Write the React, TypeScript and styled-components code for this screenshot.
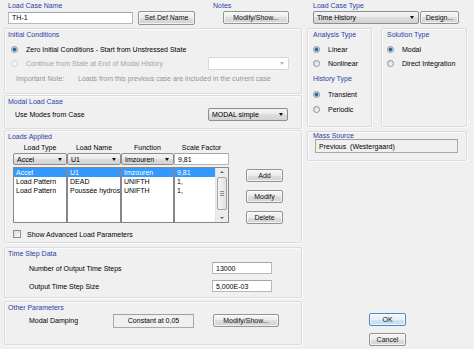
import React from "react";
import styled, { createGlobalStyle } from "styled-components";

const GlobalStyle = createGlobalStyle`
  html, body {
    margin: 0;
    padding: 0;
    background: #f0f0f0;
  }
  body {
    font-family: "Liberation Sans", Arial, sans-serif;
    font-size: 7px;
    color: #000000;
  }
`;

const Dialog = styled.div`
  box-sizing: border-box;
  width: 474px;
  height: 349px;
  overflow: hidden;
  display: flex;
  gap: 3px;
  padding-left: 4px;
  background: #f0f0f0;
`;

const LeftCol = styled.div`
  width: 298px;
  display: flex;
  flex-direction: column;
`;

const RightCol = styled.div`
  width: 165px;
  display: flex;
  flex-direction: column;
`;

const TopRow = styled.div`
  height: 28px;
  display: flex;
`;

const TopField = styled.div<{ $w: number; $pl: number }>`
  width: ${(p) => p.$w}px;
  padding-left: ${(p) => p.$pl}px;
  box-sizing: border-box;
  display: flex;
  flex-direction: column;
`;

const Caption = styled.div<{ $h?: number }>`
  color: #2b3fa6;
  height: ${(p) => p.$h ?? 11}px;
  line-height: ${(p) => p.$h ?? 11}px;
  white-space: nowrap;
`;

const GroupBox = styled.div<{ $h: number; $mt?: number; $w?: number; $pl?: number }>`
  box-sizing: border-box;
  width: ${(p) => (p.$w ? `${p.$w}px` : "100%")};
  height: ${(p) => p.$h}px;
  margin-top: ${(p) => p.$mt ?? 0}px;
  border: 1px solid #dcdcdc;
  border-radius: 2px;
  box-shadow: inset 1px 1px 0 #fafafa, 1px 1px 0 #fafafa;
  padding-left: ${(p) => p.$pl ?? 3}px;
  display: flex;
  flex-direction: column;
  flex: none;
`;

const Line = styled.div<{ $h: number; $mt?: number; $pl?: number }>`
  display: flex;
  align-items: center;
  height: ${(p) => p.$h}px;
  margin-top: ${(p) => p.$mt ?? 0}px;
  padding-left: ${(p) => p.$pl ?? 0}px;
  white-space: nowrap;
  flex: none;
`;

const Label = styled.span<{ $w?: number; $muted?: boolean }>`
  display: inline-block;
  width: ${(p) => (p.$w ? `${p.$w}px` : "auto")};
  flex: none;
  color: ${(p) => (p.$muted ? "#959595" : "inherit")};
`;

const Btn = styled.div<{ $w: number; $h?: number; $default?: boolean }>`
  box-sizing: border-box;
  width: ${(p) => p.$w}px;
  height: ${(p) => p.$h ?? 13}px;
  flex: none;
  display: flex;
  align-items: center;
  justify-content: center;
  border: 1px solid ${(p) => (p.$default ? "#4a8ac0" : "#939393")};
  border-radius: 2px;
  background: ${(p) =>
    p.$default
      ? "linear-gradient(#f4f9fd 0%, #e4eff8 50%, #d2e4f3 50%, #c6dcee 100%)"
      : "linear-gradient(#f5f5f5 0%, #ececec 50%, #dedede 50%, #d3d3d3 100%)"};
  box-shadow: inset 0 0 0 1px rgba(255, 255, 255, 0.7);
  color: #111;
  white-space: nowrap;
`;

const Combo = styled.div<{ $w: number; $h?: number; $disabled?: boolean }>`
  box-sizing: border-box;
  width: ${(p) => p.$w}px;
  height: ${(p) => p.$h ?? 13}px;
  flex: none;
  display: flex;
  align-items: center;
  justify-content: space-between;
  padding: 0 4px 0 3px;
  border: 1px solid ${(p) => (p.$disabled ? "#d6d6d6" : "#8e8e8e")};
  border-radius: ${(p) => (p.$disabled ? 1 : 2)}px;
  background: ${(p) =>
    p.$disabled
      ? "#ffffff"
      : "linear-gradient(#f3f3f3 0%, #ebebeb 50%, #dddddd 50%, #d2d2d2 100%)"};
  white-space: nowrap;
  overflow: hidden;
`;

const Arrow = styled.span<{ $disabled?: boolean }>`
  width: 0;
  height: 0;
  flex: none;
  border-left: 2.5px solid transparent;
  border-right: 2.5px solid transparent;
  border-top: 3px solid ${(p) => (p.$disabled ? "#b4b4b4" : "#111")};
`;

const TextBox = styled.div<{ $w: number; $h?: number; $grey?: boolean; $center?: boolean }>`
  box-sizing: border-box;
  width: ${(p) => p.$w}px;
  height: ${(p) => p.$h ?? 13}px;
  flex: none;
  display: flex;
  align-items: center;
  justify-content: ${(p) => (p.$center ? "center" : "flex-start")};
  padding-left: ${(p) => (p.$center ? 0 : 3)}px;
  border: 1px solid ${(p) => (p.$grey ? "#a9a9a9" : "#b5b8bf")};
  border-top-color: ${(p) => (p.$grey ? "#a0a0a0" : "#a3a6ad")};
  background: ${(p) => (p.$grey ? "#f0f0f0" : "#ffffff")};
  white-space: nowrap;
  overflow: hidden;
`;

const RadioDot = styled.span<{ $checked?: boolean; $disabled?: boolean }>`
  box-sizing: border-box;
  width: 7px;
  height: 7px;
  flex: none;
  border-radius: 50%;
  border: 1px solid ${(p) => (p.$disabled ? "#d2d2d2" : "#909090")};
  background: ${(p) =>
    p.$checked
      ? "radial-gradient(circle, #17508d 0, #2e73b8 1.3px, #bcd2ea 2.2px, #f2f2f2 2.6px)"
      : p.$disabled
      ? "#f4f4f4"
      : "linear-gradient(135deg, #d6d6d6, #fbfbfb)"};
`;

const Option = styled.div<{ $disabled?: boolean }>`
  display: flex;
  align-items: center;
  gap: 8px;
  color: ${(p) => (p.$disabled ? "#a6a6a6" : "inherit")};
`;

const CheckSquare = styled.span`
  box-sizing: border-box;
  width: 8px;
  height: 8px;
  flex: none;
  border: 1px solid #8f8f8f;
  background: linear-gradient(135deg, #d8d8d8, #fafafa);
`;

const TableArea = styled.div`
  display: flex;
  padding-left: 5px;
`;

const Grid = styled.div`
  display: flex;
  flex-direction: column;
`;

const GridRow = styled.div<{ $h: number; $mt?: number }>`
  display: flex;
  height: ${(p) => p.$h}px;
  margin-top: ${(p) => p.$mt ?? 0}px;
`;

const HeadCell = styled.div<{ $w: number }>`
  width: ${(p) => p.$w}px;
  display: flex;
  align-items: center;
  justify-content: center;
  white-space: nowrap;
`;

const ListBox = styled.div<{ $w: number }>`
  box-sizing: border-box;
  width: ${(p) => p.$w}px;
  height: 100%;
  border: 1px solid #828790;
  background: #ffffff;
  display: flex;
  overflow: hidden;
`;

const ListItems = styled.div`
  flex: 1;
  min-width: 0;
  display: flex;
  flex-direction: column;
`;

const ListItem = styled.div<{ $selected?: boolean }>`
  height: 9px;
  line-height: 9px;
  padding-left: 2px;
  white-space: nowrap;
  overflow: hidden;
  background: ${(p) => (p.$selected ? "#3399ff" : "transparent")};
  color: ${(p) => (p.$selected ? "#ffffff" : "inherit")};
`;

const ScrollBar = styled.div`
  width: 12px;
  flex: none;
  background: #ececec;
  border-left: 1px solid #e2e2e2;
  display: flex;
  flex-direction: column;
  align-items: center;
`;

const ScrollArrow = styled.span<{ $up?: boolean }>`
  width: 0;
  height: 0;
  margin: 3px 0;
  border-left: 2px solid transparent;
  border-right: 2px solid transparent;
  ${(p) => (p.$up ? "border-bottom: 2px solid #606060;" : "border-top: 2px solid #606060;")}
`;

const Thumb = styled.div`
  box-sizing: border-box;
  width: 10px;
  height: 33px;
  margin-top: 1px;
  border: 1px solid #a3a3a3;
  border-radius: 2px;
  background: linear-gradient(90deg, #f4f4f4, #e2e2e2);
  display: flex;
  align-items: center;
  justify-content: center;
`;

const Grip = styled.span`
  width: 4px;
  height: 5px;
  background: repeating-linear-gradient(#8a8a8a 0 1px, transparent 1px 2px);
`;

const Spacer = styled.div`
  flex: 1;
`;

const ButtonStack = styled.div<{ $pt: number; $gap: number; $ml?: number }>`
  display: flex;
  flex-direction: column;
  align-items: center;
  gap: ${(p) => p.$gap}px;
  padding-top: ${(p) => p.$pt}px;
  margin-left: ${(p) => p.$ml ?? 0}px;
`;

const BoxRow = styled.div`
  display: flex;
  gap: 9px;
  margin-left: 2px;
  margin-top: 4px;
`;

const FooterButtons = styled.div`
  margin-top: auto;
  margin-bottom: 3px;
  display: flex;
  flex-direction: column;
  align-items: center;
  gap: 7px;
`;

const columns = [54, 54, 53, 55];

const listData = [
  ["Accel", "Load Pattern", "Load Pattern"],
  ["U1", "DEAD", "Poussée hydros"],
  ["Imzouren", "UNIFTH", "UNIFTH"],
  ["9,81", "1,", "1,"],
];

const App: React.FC = () => {
  return (
    <>
      <GlobalStyle />
      <Dialog>
        <LeftCol>
          <TopRow>
            <TopField $w={205} $pl={4}>
              <Caption>Load Case Name</Caption>
              <Line $h={13}>
                <TextBox $w={125} $h={12}>TH-1</TextBox>
                <Btn $w={57} $h={14} style={{ marginLeft: 5 }}>Set Def Name</Btn>
              </Line>
            </TopField>
            <TopField $w={90} $pl={4}>
              <Caption>Notes</Caption>
              <Line $h={13} $pl={10}>
                <Btn $w={66}>Modify/Show...</Btn>
              </Line>
            </TopField>
          </TopRow>

          <GroupBox $h={66}>
            <Caption>Initial Conditions</Caption>
            <Line $h={14} $mt={2} $pl={3}>
              <Option>
                <RadioDot $checked />
                Zero Initial Conditions - Start from Unstressed State
              </Option>
            </Line>
            <Line $h={14} $pl={3}>
              <Option $disabled>
                <RadioDot $disabled />
                Continue from State at End of Modal History
              </Option>
              <Combo $w={81} $disabled style={{ marginLeft: "auto", marginRight: 12 }}>
                <span />
                <Arrow $disabled />
              </Combo>
            </Line>
            <Line $h={16} $pl={8}>
              <Label $w={62} $muted>Important Note:</Label>
              <Label $muted>Loads from this previous case are included in the current case</Label>
            </Line>
          </GroupBox>

          <GroupBox $h={34} $mt={1}>
            <Caption>Modal Load Case</Caption>
            <Line $h={14} $pl={7}>
              <Label>Use Modes from Case</Label>
              <Combo $w={80} style={{ marginLeft: "auto", marginRight: 13 }}>
                MODAL simple
                <Arrow />
              </Combo>
            </Line>
          </GroupBox>

          <GroupBox $h={113} $mt={1}>
            <Caption>Loads Applied</Caption>
            <TableArea>
              <Grid>
                <GridRow $h={11}>
                  <HeadCell $w={54}>Load Type</HeadCell>
                  <HeadCell $w={54}>Load Name</HeadCell>
                  <HeadCell $w={53}>Function</HeadCell>
                  <HeadCell $w={55}>Scale Factor</HeadCell>
                </GridRow>
                <GridRow $h={12}>
                  <Combo $w={54} $h={12}>
                    Accel
                    <Arrow />
                  </Combo>
                  <Combo $w={54} $h={12}>
                    U1
                    <Arrow />
                  </Combo>
                  <Combo $w={53} $h={12}>
                    Imzouren
                    <Arrow />
                  </Combo>
                  <TextBox $w={55} $h={12}>9,81</TextBox>
                </GridRow>
                <GridRow $h={56} $mt={2}>
                  {listData.map((items, c) => (
                    <ListBox key={c} $w={columns[c]}>
                      <ListItems>
                        {items.map((item, r) => (
                          <ListItem key={r} $selected={r === 0}>
                            {item}
                          </ListItem>
                        ))}
                      </ListItems>
                      {c === 3 && (
                        <ScrollBar>
                          <ScrollArrow $up />
                          <Thumb>
                            <Grip />
                          </Thumb>
                          <Spacer />
                          <ScrollArrow />
                        </ScrollBar>
                      )}
                    </ListBox>
                  ))}
                </GridRow>
              </Grid>
              <ButtonStack $pt={27} $gap={8} $ml={17}>
                <Btn $w={37}>Add</Btn>
                <Btn $w={37}>Modify</Btn>
                <Btn $w={37}>Delete</Btn>
              </ButtonStack>
            </TableArea>
            <Line $h={16} $mt={2} $pl={5}>
              <CheckSquare />
              <Label style={{ marginLeft: 6 }}>Show Advanced Load Parameters</Label>
            </Line>
          </GroupBox>

          <GroupBox $h={51} $mt={4}>
            <Caption>Time Step Data</Caption>
            <Line $h={14} $mt={2} $pl={21}>
              <Label $w={183}>Number of Output Time Steps</Label>
              <TextBox $w={60} $h={12}>13000</TextBox>
            </Line>
            <Line $h={14} $mt={4} $pl={21}>
              <Label $w={183}>Output Time Step Size</Label>
              <TextBox $w={60} $h={12}>5,000E-03</TextBox>
            </Line>
          </GroupBox>

          <GroupBox $h={44} $mt={3}>
            <Caption>Other Parameters</Caption>
            <Line $h={15} $pl={21}>
              <Label $w={84}>Modal Damping</Label>
              <TextBox $w={81} $h={14} $grey $center>
                Constant at 0,05
              </TextBox>
              <Btn $w={66} style={{ marginLeft: 19 }}>Modify/Show...</Btn>
            </Line>
          </GroupBox>
        </LeftCol>

        <RightCol>
          <TopField $w={165} $pl={8}>
            <Caption>Load Case Type</Caption>
            <Line $h={13}>
              <Combo $w={106}>
                Time History
                <Arrow />
              </Combo>
              <Btn $w={39} style={{ marginLeft: 1 }}>Design...</Btn>
            </Line>
          </TopField>

          <BoxRow>
            <GroupBox $w={65} $h={99} $pl={5}>
              <Caption>Analysis Type</Caption>
              <Line $h={14} $mt={2}>
                <Option>
                  <RadioDot $checked />
                  Linear
                </Option>
              </Line>
              <Line $h={15}>
                <Option>
                  <RadioDot />
                  Nonlinear
                </Option>
              </Line>
              <Caption $h={16}>History Type</Caption>
              <Line $h={15}>
                <Option>
                  <RadioDot $checked />
                  Transient
                </Option>
              </Line>
              <Line $h={15}>
                <Option>
                  <RadioDot />
                  Periodic
                </Option>
              </Line>
            </GroupBox>
            <GroupBox $w={86} $h={99} $pl={5}>
              <Caption>Solution Type</Caption>
              <Line $h={14} $mt={2}>
                <Option>
                  <RadioDot $checked />
                  Modal
                </Option>
              </Line>
              <Line $h={15}>
                <Option>
                  <RadioDot />
                  Direct Integration
                </Option>
              </Line>
            </GroupBox>
          </BoxRow>

          <GroupBox $w={160} $h={30} $mt={4} $pl={5} style={{ marginLeft: 2 }}>
            <Caption $h={7}>Mass Source</Caption>
            <Line $h={14} $pl={2}>
              <TextBox $w={143} $h={14} $grey>
                Previous&nbsp;&nbsp;(Westergaard)
              </TextBox>
            </Line>
          </GroupBox>

          <FooterButtons>
            <Btn $w={37} $default>OK</Btn>
            <Btn $w={37}>Cancel</Btn>
          </FooterButtons>
        </RightCol>
      </Dialog>
    </>
  );
};

export default App;
